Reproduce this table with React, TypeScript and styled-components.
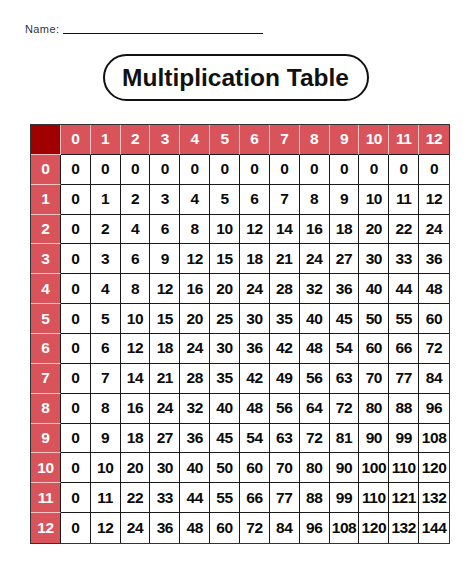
import React from 'react';
import styled, { createGlobalStyle } from 'styled-components';

const SIZE = 13;
const FONT = `'Liberation Sans', Arial, sans-serif`;

const GlobalStyle = createGlobalStyle`
  html, body {
    margin: 0;
    padding: 0;
    background: #ffffff;
  }
  body {
    font-family: ${FONT};
  }
`;

type CellKind = 'corner' | 'top' | 'side' | 'body';

const App: React.FC = () => {
  const cells: { kind: CellKind; text: string; lastCol: boolean; lastRow: boolean }[] = [];
  for (let r = -1; r < SIZE; r++) {
    for (let c = -1; c < SIZE; c++) {
      let kind: CellKind = 'body';
      let text = '';
      if (r === -1 && c === -1) kind = 'corner';
      else if (r === -1) {
        kind = 'top';
        text = String(c);
      } else if (c === -1) {
        kind = 'side';
        text = String(r);
      } else text = String(r * c);
      cells.push({ kind, text, lastCol: c === SIZE - 1, lastRow: r === SIZE - 1 });
    }
  }

  return (
    <Page>
      <GlobalStyle />
      <NameRow>
        <NameLabel>Name:</NameLabel>
        <NameLine />
      </NameRow>
      <TitleWrap>
        <TitlePill>Multiplication Table</TitlePill>
      </TitleWrap>
      <Table>
        {cells.map((cell, i) => (
          <Cell key={i} $kind={cell.kind} $lastCol={cell.lastCol} $lastRow={cell.lastRow}>
            {cell.text}
          </Cell>
        ))}
      </Table>
    </Page>
  );
};

export default App;

const Page = styled.div`
  width: 474px;
  height: 568px;
  display: flex;
  flex-direction: column;
  box-sizing: border-box;
  padding-top: 23px;
`;

const NameRow = styled.div`
  display: flex;
  align-items: flex-end;
  padding-left: 25px;
  height: 12px;
`;

const NameLabel = styled.span`
  font-size: 11px;
  color: #333;
  line-height: 12px;
  letter-spacing: 0.4px;
`;

const NameLine = styled.div`
  width: 200px;
  height: 1.5px;
  background: #111;
  margin-left: 4px;
  margin-bottom: 1px;
`;

const TitleWrap = styled.div`
  display: flex;
  justify-content: center;
  margin-top: 19px;
`;

const TitlePill = styled.div`
  width: 266px;
  height: 47px;
  box-sizing: border-box;
  border: 2px solid #111;
  border-radius: 24px;
  display: flex;
  align-items: center;
  justify-content: center;
  font-size: 24.5px;
  font-weight: 700;
  color: #111;
  margin-right: 3px;
  padding-top: 1px;
`;

const Table = styled.div`
  margin-top: 23px;
  margin-left: 30px;
  width: 420px;
  height: 420px;
  box-sizing: border-box;
  border: 1.5px solid #333;
  display: grid;
  grid-template-columns: repeat(14, 1fr);
  grid-template-rows: repeat(14, 1fr);
`;

const LIGHT = '#f2c4c6';
const DARK = '#1a1a1a';

const Cell = styled.div<{ $kind: CellKind; $lastCol: boolean; $lastRow: boolean }>`
  display: flex;
  align-items: center;
  justify-content: center;
  font-weight: 700;
  font-size: 15.5px;
  letter-spacing: -0.4px;
  min-width: 0;
  overflow: hidden;
  white-space: nowrap;
  color: ${(p) => (p.$kind === 'body' ? '#0a0a0a' : '#ffffff')};
  background: ${(p) =>
    p.$kind === 'corner' ? '#a10000' : p.$kind === 'body' ? '#ffffff' : '#d9545a'};
  border-right: ${(p) =>
    p.$lastCol
      ? 'none'
      : `1.5px solid ${p.$kind === 'side' || p.$kind === 'body' ? DARK : LIGHT}`};
  border-bottom: ${(p) =>
    p.$lastRow
      ? 'none'
      : `1.5px solid ${p.$kind === 'top' || p.$kind === 'body' ? DARK : LIGHT}`};
`;
